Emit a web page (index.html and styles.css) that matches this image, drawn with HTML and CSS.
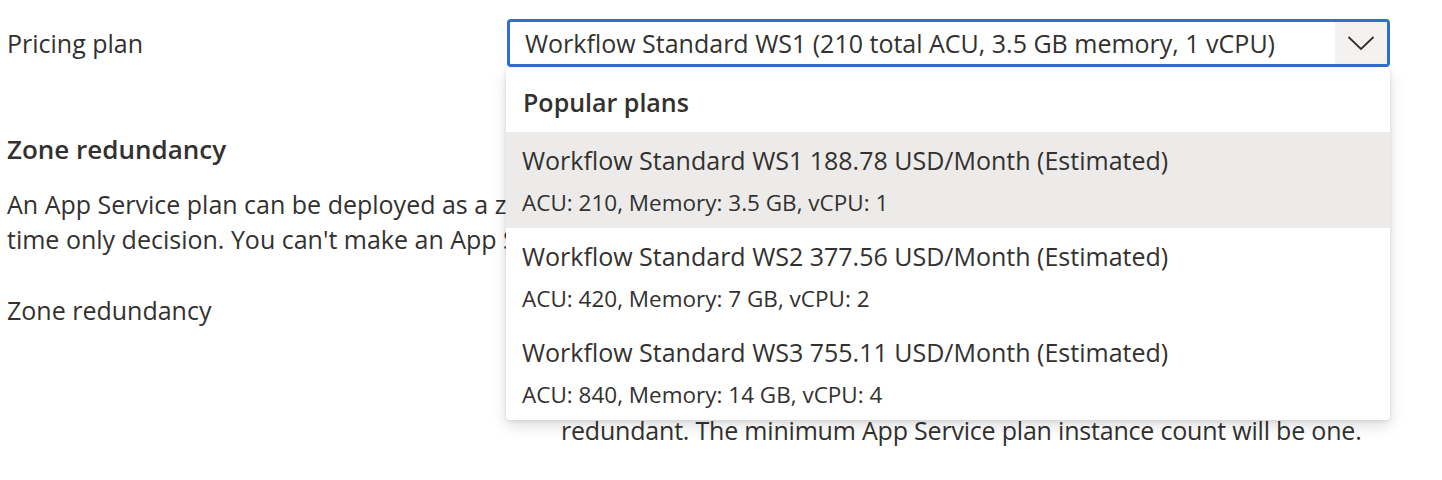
FILE: index.html
```html
<!DOCTYPE html>
<html lang="en">
<head>
  <meta charset="UTF-8" />
  <title>Pricing plan</title>
  <link rel="stylesheet" href="styles.css">
</head>
<body>
  <main class="form">
    <!-- Pricing plan row -->
    <div class="field pricing">
      <label class="field-label">Pricing plan</label>
      <div class="select-wrap">
        <div class="select">
          <span class="select-value">Workflow Standard WS1 (210 total ACU, 3.5 GB memory, 1 vCPU)</span>
          <span class="select-caret">
            <svg width="28" height="16" viewBox="0 0 28 16"><path d="M1.5 2 L14 14 L26.5 2" fill="none" stroke="#323130" stroke-width="1.8"/></svg>
          </span>
        </div>

        <div class="dropdown">
          <div class="group-header">Popular plans</div>
          <div class="option selected">
            <div class="option-title">Workflow Standard WS1 188.78 USD/Month (Estimated)</div>
            <div class="option-sub">ACU: 210, Memory: 3.5 GB, vCPU: 1</div>
          </div>
          <div class="option">
            <div class="option-title">Workflow Standard WS2 377.56 USD/Month (Estimated)</div>
            <div class="option-sub">ACU: 420, Memory: 7 GB, vCPU: 2</div>
          </div>
          <div class="option">
            <div class="option-title">Workflow Standard WS3 755.11 USD/Month (Estimated)</div>
            <div class="option-sub">ACU: 840, Memory: 14 GB, vCPU: 4</div>
          </div>
        </div>
      </div>
    </div>

    <!-- Zone redundancy section -->
    <section class="zone">
      <h2>Zone redundancy</h2>
      <p class="zone-text">An App Service plan can be deployed as a zone redundant service in the regions that support it. This is a deployment<br>time only decision. You can't make an App Service plan zone redundant after it has been deployed.</p>

      <div class="field zone-field">
        <label class="field-label">Zone redundancy</label>
        <div class="radios">
          <div class="radio">
            <span class="radio-dot"></span>
            <span class="radio-text">Enabled: Your App Service plan and the apps in it will be zone<br>redundant. The minimum App Service plan instance count will be three.</span>
          </div>
          <div class="radio">
            <span class="radio-dot"></span>
            <span class="radio-text">Disabled: Your App Service Plan and the apps in it will not be zone<br>redundant. The minimum App Service plan instance count will be one.</span>
          </div>
        </div>
      </div>
    </section>
  </main>
</body>
</html>
```

FILE: styles.css
```css
body {
  margin: 0;
  font-family: "Open Sans", "Noto Sans", sans-serif;
  font-size: 25px;
  color: #323130;
  background: #fff;
  overflow: hidden;
}

.form {
  padding: 19px 0 0 7px;
}

.field {
  display: grid;
  grid-template-columns: 500px 883px;
}

.field-label {
  line-height: 48px;
}

.select-wrap {
  position: relative;
}

.select {
  display: flex;
  align-items: stretch;
  height: 48px;
  box-sizing: border-box;
  border: 3px solid #2f6fce;
  border-radius: 4px;
}

.select-value {
  flex: 1;
  padding-left: 15px;
  line-height: 42px;
  white-space: nowrap;
}

.select-caret {
  width: 52px;
  background: #f3f2f1;
  display: flex;
  align-items: center;
  justify-content: center;
}

.dropdown {
  position: absolute;
  top: 49px;
  left: -1px;
  width: 884px;
  background: #fff;
  border-radius: 4px;
  box-shadow: 0 6px 15px rgba(0, 0, 0, 0.13), 0 1px 4px rgba(0, 0, 0, 0.11);
  z-index: 2;
}

.group-header {
  height: 64px;
  line-height: 68px;
  padding-left: 17px;
  font-weight: 600;
}

.option {
  height: 96px;
  padding: 10px 0 0 16px;
  box-sizing: border-box;
}

.option.selected {
  background: #edebe9;
}

.option-title {
  line-height: 36px;
}

.option-sub {
  font-size: 22.5px;
  line-height: 50px;
}

.zone h2 {
  margin: 62px 0 0;
  font-size: 26px;
  font-weight: 600;
  line-height: 40px;
}

.zone-text {
  margin: 18px 0 0;
  line-height: 35px;
  white-space: nowrap;
}

.zone-field {
  margin-top: 36px;
}

.zone-field .field-label {
  line-height: 35px;
}

.radio {
  display: flex;
  gap: 22px;
  margin-bottom: 15px;
}

.radio-dot {
  width: 28px;
  height: 28px;
  margin-top: 2px;
  border: 2px solid #323130;
  border-radius: 50%;
  flex: none;
}

.radio-text {
  line-height: 35px;
  white-space: nowrap;
  letter-spacing: -0.2px;
}
```
